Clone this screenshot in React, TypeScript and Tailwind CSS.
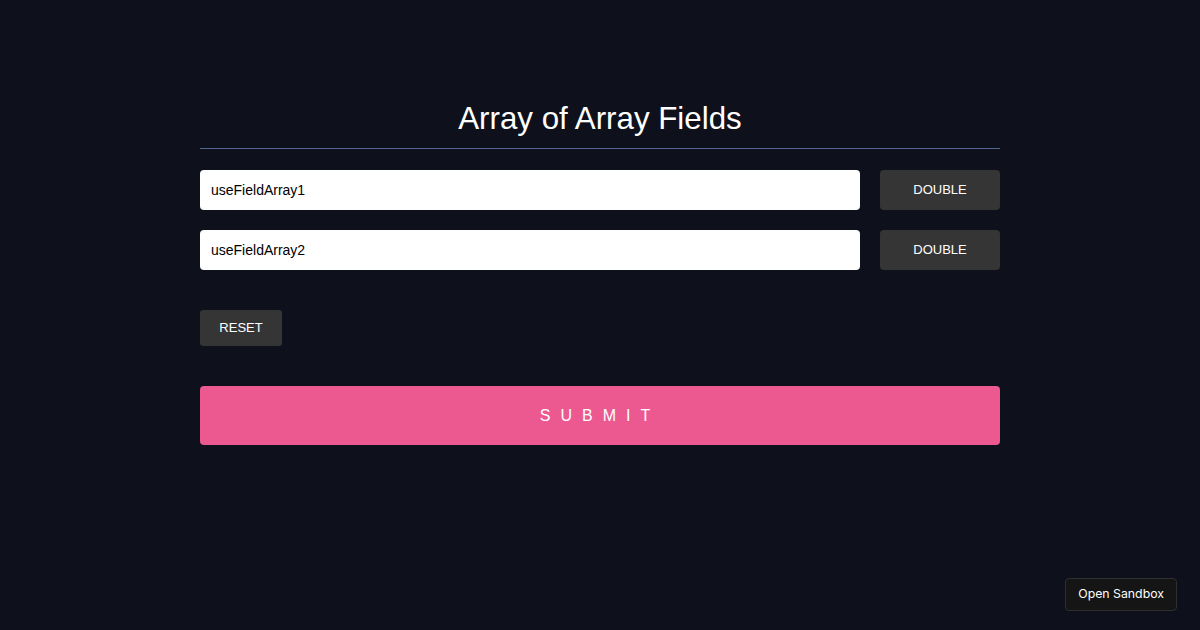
import React from "react"

const rows = ["useFieldArray1", "useFieldArray2"]

export default function App() {
  return (
    <div className="relative h-[630px] w-[1200px] bg-[#0e101c] font-['Liberation_Sans',Arial,sans-serif] text-white">
      <form className="mx-auto flex w-[800px] flex-col pt-[101px]">
        <h1 className="border-b border-[#516391] pb-[11px] text-center text-[31.3px] leading-[36px] font-normal">
          Array of Array Fields
        </h1>

        <div className="mt-[21px] flex flex-col gap-5">
          {rows.map((value) => (
            <div key={value} className="flex gap-5">
              <input
                defaultValue={value}
                className="h-10 flex-1 rounded bg-white px-[11px] text-[14px] text-black outline-none"
              />
              <button
                type="button"
                className="h-10 w-[120px] rounded bg-[#353535] text-[13px] text-white"
              >
                DOUBLE
              </button>
            </div>
          ))}
        </div>

        <div className="mt-10">
          <button
            type="button"
            className="h-9 w-[82px] rounded-[3px] bg-[#353535] text-[13px] text-white"
          >
            RESET
          </button>
        </div>

        <button
          type="submit"
          className="mt-10 h-[59px] w-full rounded bg-[#ec5990] text-[16px] tracking-[10px] text-white"
        >
          SUBMIT
        </button>
      </form>

      {/* codesandbox floating button */}
      <button className="absolute right-[23px] bottom-[19px] h-[33px] rounded border border-[#2f2f2f] bg-[#151515] px-3 font-['Inter',sans-serif] text-[12.3px] text-white">
        Open Sandbox
      </button>
    </div>
  )
}
